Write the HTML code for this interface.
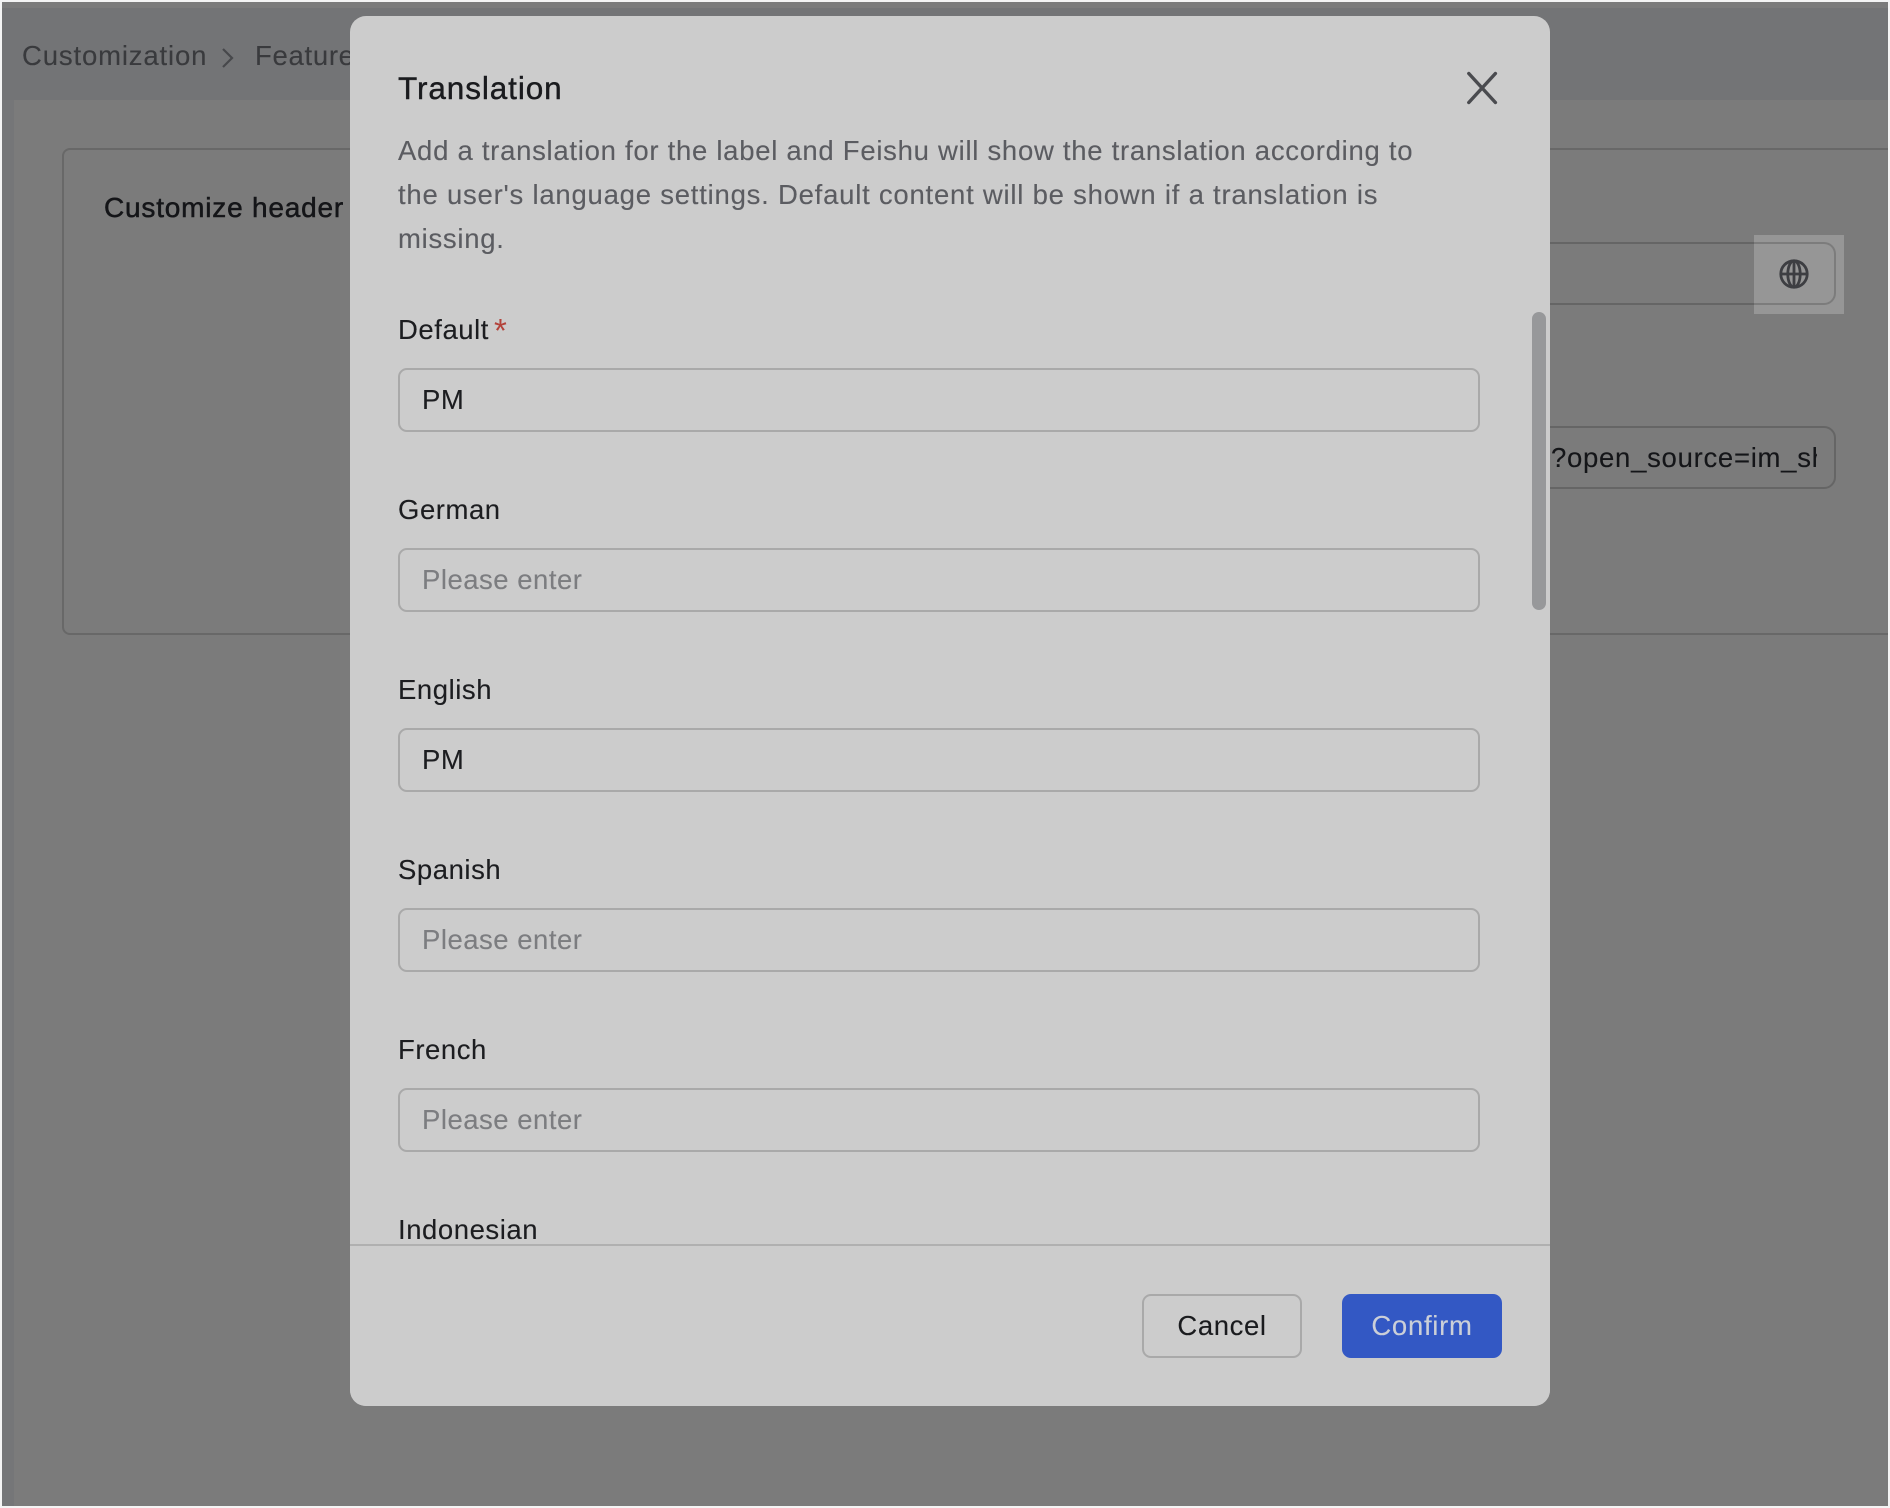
<!DOCTYPE html>
<html>
<head>
<meta charset="utf-8">
<style>
html,body{margin:0;padding:0;background:#f4f4f4;width:1890px;height:1508px;overflow:hidden}
body{position:relative;font-family:"Liberation Sans",sans-serif}
.a{position:absolute;white-space:nowrap}
.t{font-size:27.5px;line-height:44px;letter-spacing:.72px;-webkit-text-stroke:.12px currentColor}
.lbl{left:398px;color:#1c1d20;letter-spacing:.55px}
.inp{position:absolute;left:398px;width:1078px;height:60px;border:2px solid #a9a9a9;border-radius:9px;line-height:60px;font-size:27.5px;letter-spacing:.5px;text-indent:22px;color:#1c1d20;-webkit-text-stroke:.12px currentColor}
.ph{color:#7c7d80}
</style>
</head>
<body>
<div class="a" style="left:2px;top:2px;width:1886px;height:1504px;background:#7b7b7b;overflow:hidden">
  <div class="a" style="left:0;top:6px;width:1886px;height:92px;background:#737476"></div>
  <div class="a" style="left:0;top:98px;width:12px;height:1406px;background:#757678"></div>
  <div class="a t" style="left:20px;top:32px;color:#393a3d;letter-spacing:.85px">Customization</div>
  <svg class="a" style="left:219px;top:45px" width="14" height="22" viewBox="0 0 14 22"><path d="M2 2l9 9-9 9" fill="none" stroke="#47484b" stroke-width="2.2"/></svg>
  <div class="a t" style="left:253px;top:32px;color:#393a3d;letter-spacing:.7px">Feature</div>
  <div class="a" style="left:60px;top:146px;width:1900px;height:483px;border:2px solid #686868;border-radius:8px"></div>
  <div class="a" style="left:102px;top:184px;font-size:28px;line-height:44px;letter-spacing:.8px;color:#141518;-webkit-text-stroke:.5px #141518">Customize header</div>
  <div class="a" style="left:1400px;top:240px;width:432px;height:59px;border:2px solid #656565;border-radius:12px"></div>
  <div class="a" style="left:1752px;top:233px;width:90px;height:79px;background:#969696"></div>
  <div class="a" style="left:1400px;top:240px;width:432px;height:59px;border:2px solid #7c7c7c;border-left:0;border-radius:12px;clip-path:inset(0 0 0 352px)"></div>
  <svg class="a" style="left:1776px;top:256px" width="32" height="32" viewBox="0 0 32 32" fill="none" stroke="#3d3e42" stroke-width="2.8"><circle cx="16" cy="16" r="13.2"/><ellipse cx="16" cy="16" rx="6.2" ry="13.2"/><path d="M16 2.8v26.4M2.8 16h26.4"/></svg>
  <div class="a" style="left:1400px;top:424px;width:430px;height:59px;border:2px solid #656565;border-radius:12px"></div>
  <div class="a t" style="left:1549px;top:434px;width:266px;overflow:hidden;color:#141518">?open_source=im_share</div>
</div>

<div class="a" style="left:350px;top:16px;width:1200px;height:1390px;background:#cccccc;border-radius:16px;overflow:hidden">
  <div class="a" style="left:48px;top:49px;font-size:31.5px;line-height:46px;color:#1a1b1e;letter-spacing:.9px;-webkit-text-stroke:.4px #1a1b1e">Translation</div>
  <svg class="a" style="left:1116px;top:55px" width="34" height="34" viewBox="0 0 34 34"><path d="M2.8 2.5l26.6 29M29.4 2.5l-26.6 29" stroke="#4a4b4f" stroke-width="3.4" stroke-linecap="round" fill="none"/></svg>
  <div class="a t" style="left:48px;top:112.5px;color:#5b5c61;line-height:44px">Add a translation for the label and Feishu will show the translation according to<br><span style="letter-spacing:.77px">the user's language settings. Default content will be shown if a translation is</span><br>missing.</div>

  <div class="a t lbl" style="left:48px;top:292px">Default<span style="color:#b3423a;margin-left:5px;font-size:33px;line-height:0;position:relative;top:3px;-webkit-text-stroke:0">*</span></div>
  <div class="inp" style="left:48px;top:352px">PM</div>
  <div class="a t lbl" style="left:48px;top:472px">German</div>
  <div class="inp ph" style="left:48px;top:532px">Please enter</div>
  <div class="a t lbl" style="left:48px;top:652px">English</div>
  <div class="inp" style="left:48px;top:712px">PM</div>
  <div class="a t lbl" style="left:48px;top:832px">Spanish</div>
  <div class="inp ph" style="left:48px;top:892px">Please enter</div>
  <div class="a t lbl" style="left:48px;top:1012px">French</div>
  <div class="inp ph" style="left:48px;top:1072px">Please enter</div>
  <div class="a t lbl" style="left:48px;top:1192px">Indonesian</div>

  <div class="a" style="left:1182px;top:296px;width:14px;height:298px;background:#97989a;border-radius:7px"></div>
  <div class="a" style="left:0;top:1228px;width:1200px;height:162px;background:#cccccc"></div>
  <div class="a" style="left:0;top:1228px;width:1200px;height:2px;background:#b0b0b0"></div>
  <div class="a t" style="left:792px;top:1278px;width:156px;height:60px;border:2px solid #a9a9a9;border-radius:9px;line-height:60px;text-align:center;color:#1a1b1e;letter-spacing:.6px">Cancel</div>
  <div class="a t" style="left:992px;top:1278px;width:160px;height:64px;background:#3358c4;border-radius:9px;line-height:64px;text-align:center;color:#cbcfd8">Confirm</div>
</div>
</body>
</html>
